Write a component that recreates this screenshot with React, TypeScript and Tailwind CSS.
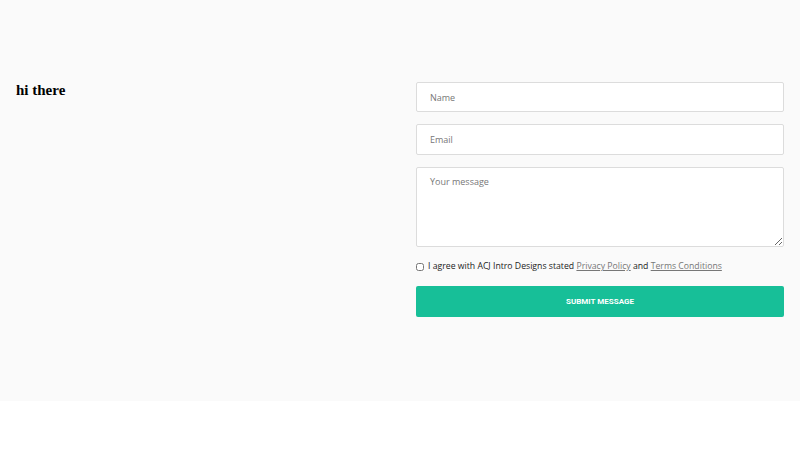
import React from "react";

export default function App() {
  return (
    <div className="min-h-[450px] bg-white">
      <section className="bg-[#fafafa] h-[401px] pt-[82px]">
        <div className="grid grid-cols-2">
          <div className="px-4">
            <h3 className="font-['Liberation_Serif',serif] text-[15px] font-bold text-black leading-[1.2] -mt-[1px]">
              hi there
            </h3>
          </div>
          <div className="px-4 font-['Open_Sans',sans-serif]">
            <form className="flex flex-col">
              <input
                type="text"
                placeholder="Name"
                className="h-[30px] w-full rounded-[2px] border border-[#dcdcdc] bg-white px-[13px] text-[9px] text-[#555] placeholder:text-[#777] outline-none"
              />
              <input
                type="email"
                placeholder="Email"
                className="mt-[12px] h-[31px] w-full rounded-[2px] border border-[#dcdcdc] bg-white px-[13px] text-[9px] text-[#555] placeholder:text-[#777] outline-none"
              />
              <textarea
                placeholder="Your message"
                className="mt-[12px] h-[80px] w-full rounded-[2px] border border-[#dcdcdc] bg-white px-[13px] py-[7px] text-[9px] leading-[1.5] text-[#555] placeholder:text-[#777] outline-none"
              />
              <label className="mt-[14px] flex h-[12px] items-center gap-[4px] text-[8.7px] text-[#222]">
                <input type="checkbox" className="m-0 h-[8px] w-[8px]" />
                <span>
                  I agree with ACJ Intro Designs stated{" "}
                  <a href="#" className="text-[#777] underline">Privacy Policy</a> and{" "}
                  <a href="#" className="text-[#777] underline">Terms Conditions</a>
                </span>
              </label>
              <button
                type="button"
                className="mt-[13px] h-[31px] w-full rounded-[2px] bg-[#17bf98] font-['Roboto',sans-serif] text-[8px] font-bold uppercase text-white"
              >
                Submit Message
              </button>
            </form>
          </div>
        </div>
      </section>
    </div>
  );
}
